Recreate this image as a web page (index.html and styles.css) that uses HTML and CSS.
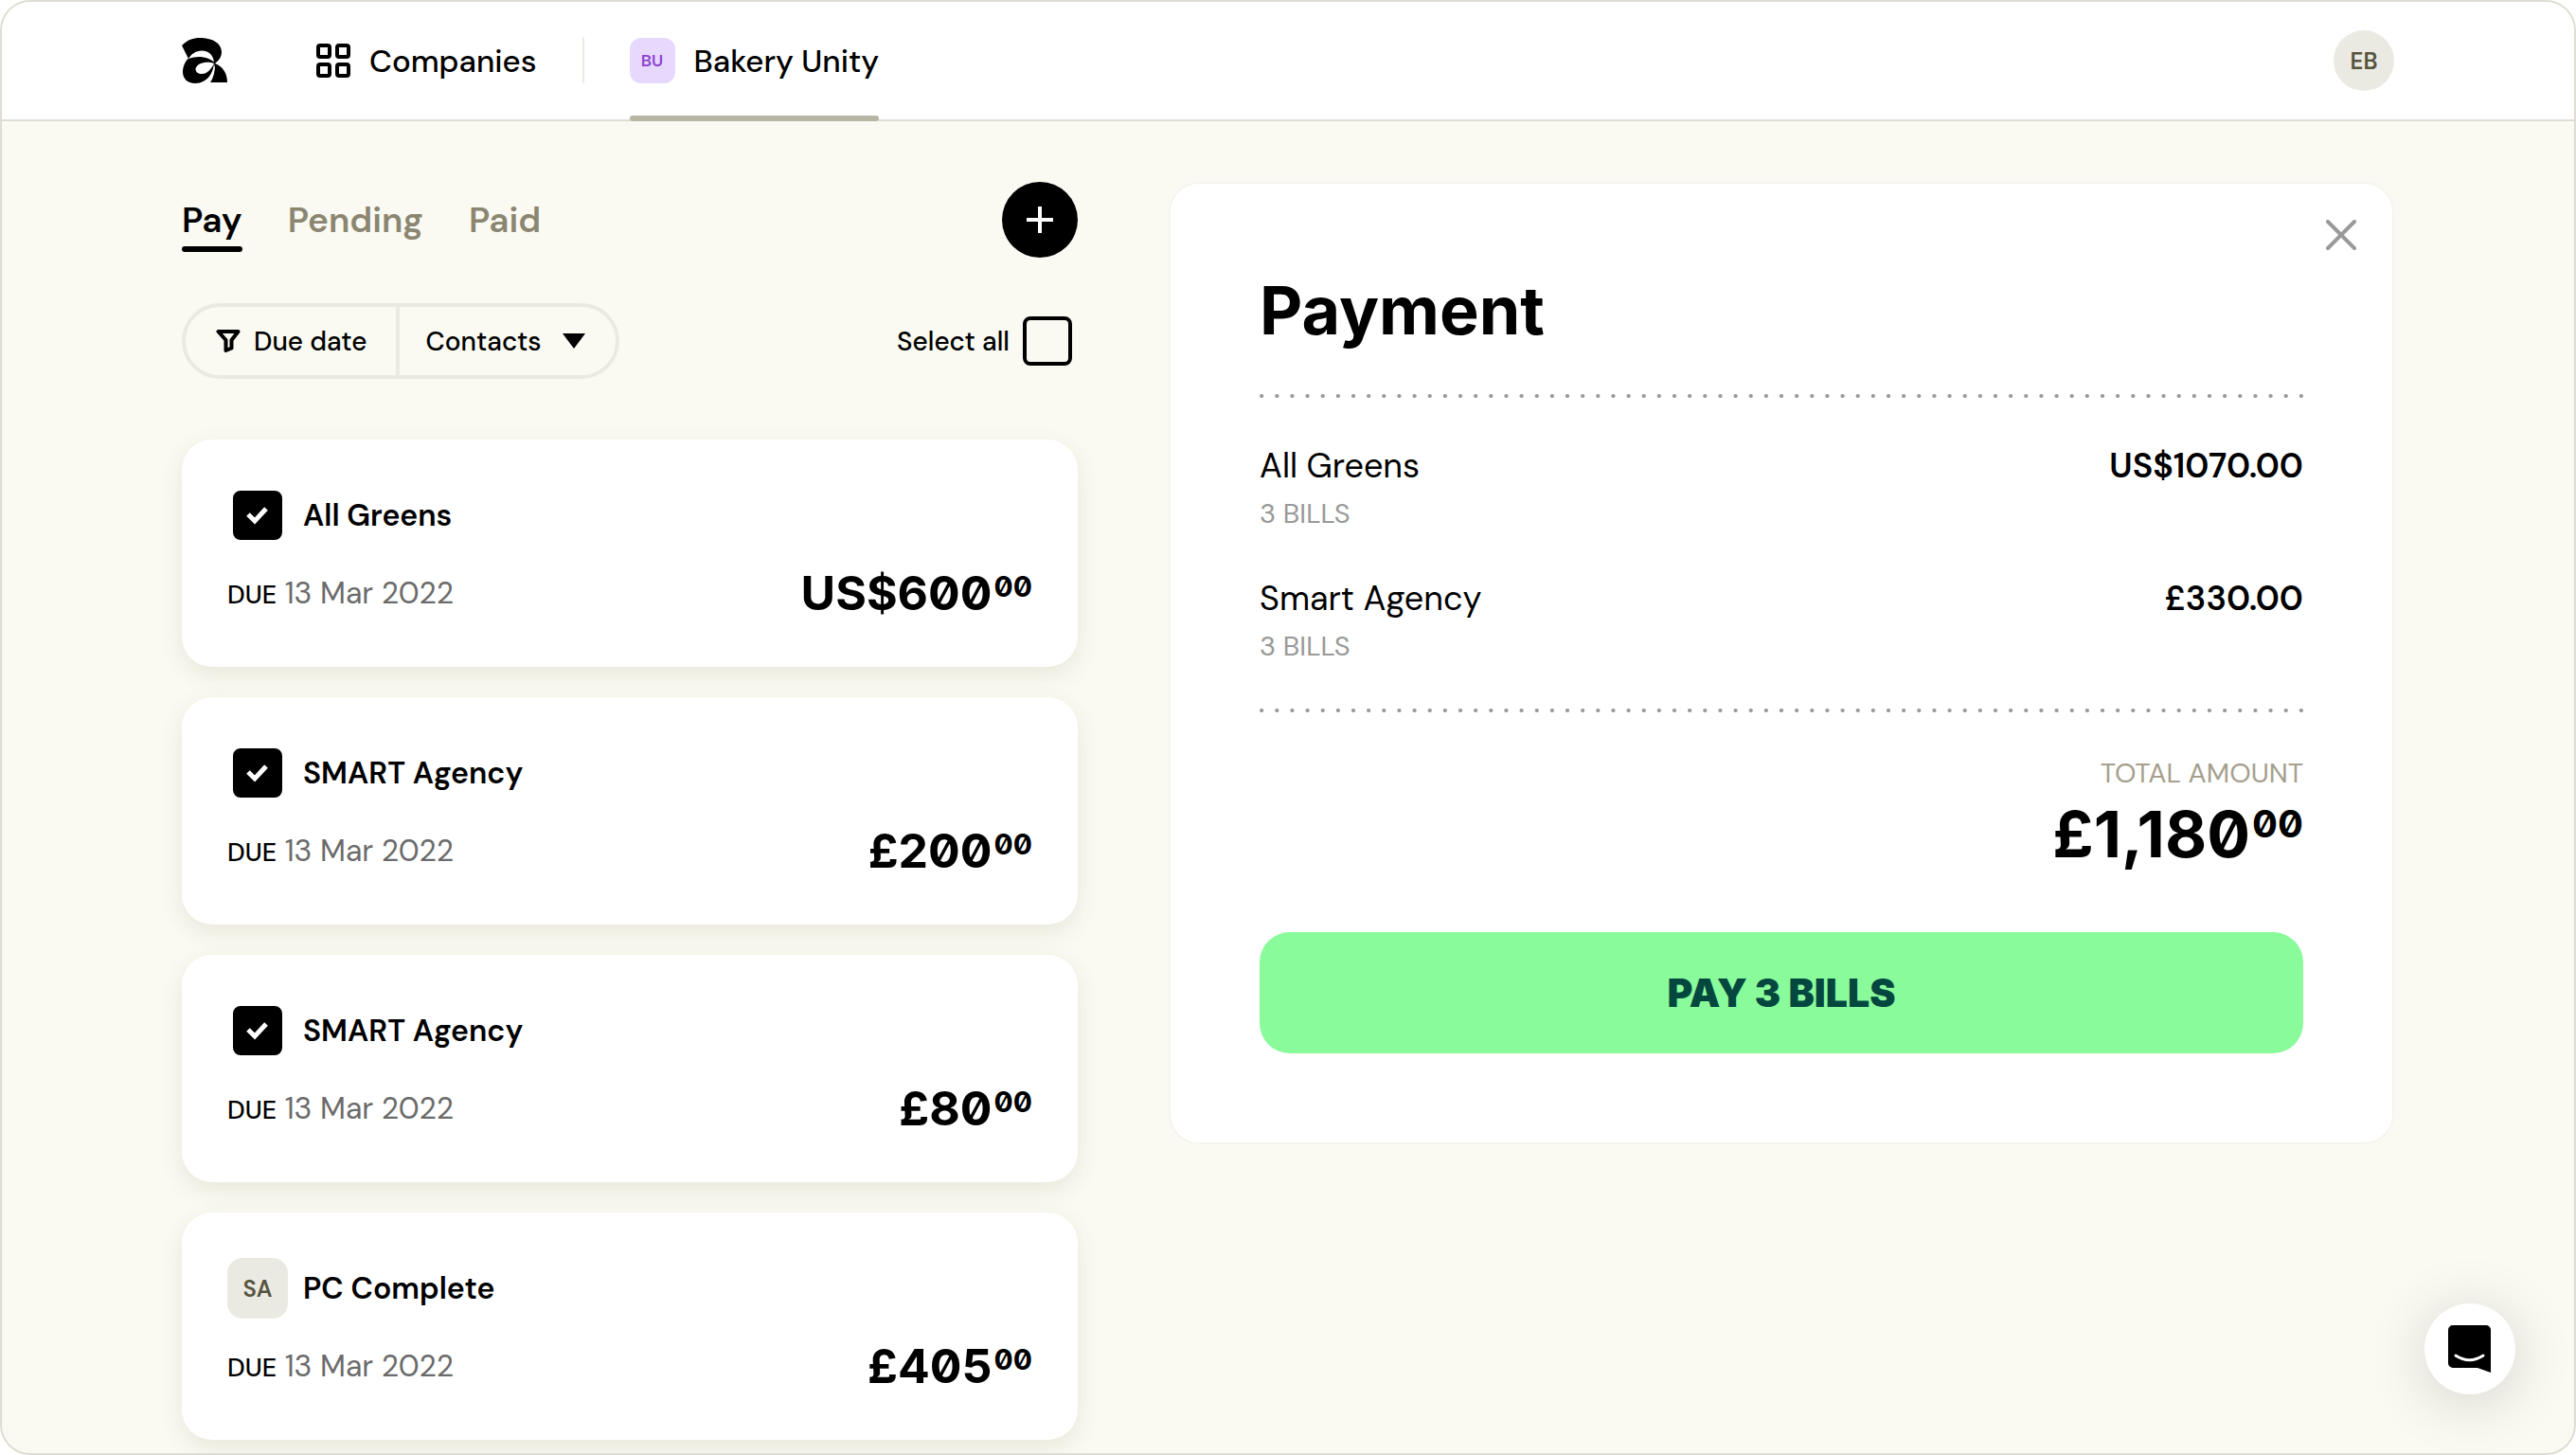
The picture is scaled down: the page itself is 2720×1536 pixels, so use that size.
FILE: index.html
```html
<!DOCTYPE html>
<html lang="en">
<head>
<meta charset="utf-8">
<meta name="viewport" content="width=device-width, initial-scale=1">
<title>Bakery Unity – Pay bills</title>
<link rel="stylesheet" href="styles.css">
</head>
<body>
<div class="app">
  <header class="topbar">
    <a class="logo" href="#" aria-label="Home">
      <svg width="48" height="48" viewBox="0 0 48 48" aria-hidden="true">
        <path d="M0 8C6 2 12 0 19 0c12 0 23 5 23 15 0 5-3 9-7 12 8 3 13 10 13 20H30c3-4 5-11 5-19C33 35 28 48 14 48 6 48 1 43 1 36 1 28 6 22 7 22Z"/>
        <path fill="#fff" d="M7 22c3-5 8-8.500 14-8.500 7 0 12 4 13 12C28 20 17 18 7 22Z"/>
        <path fill="#fff" d="M34 27c-6-3-19-1-19.500 6 0 3 3 5 6.500 5 6 0 10-5 13-11Z"/>
        <path fill="#fff" d="M34 27c-1 9-5 17-12 21h7c4-6 6-13 5-21Z"/>
      </svg>
    </a>
    <nav class="topnav">
      <a class="topnav-link" href="#">
        <svg width="36" height="36" viewBox="0 0 36 36" fill="none" stroke="#000" stroke-width="4" aria-hidden="true">
          <rect x="2" y="2" width="12" height="12" rx="2"/><rect x="22" y="2" width="12" height="12" rx="2"/>
          <rect x="2" y="22" width="12" height="12" rx="2"/><rect x="22" y="22" width="12" height="12" rx="2"/>
        </svg>
        Companies
      </a>
      <span class="divider"></span>
      <a class="topnav-link current" href="#" aria-current="page"><span class="badge">BU</span>Bakery Unity</a>
    </nav>
    <button class="user" type="button">EB</button>
  </header>

  <main class="content">
    <section class="bills">
      <div class="bills-head">
        <nav class="tabs">
          <a class="tab active" href="#">Pay</a>
          <a class="tab" href="#">Pending</a>
          <a class="tab" href="#">Paid</a>
        </nav>
        <button class="add" type="button" aria-label="Add bill">
          <svg width="28" height="28" viewBox="0 0 28 28" stroke="#fff" stroke-width="4" aria-hidden="true"><path d="M14 0v28M0 14h28"/></svg>
        </button>
      </div>

      <div class="tools">
        <div class="filters">
          <button class="filter" type="button">
            <svg width="26" height="26" viewBox="0 0 26 26" fill="none" stroke="#000" stroke-width="4" stroke-linejoin="round" aria-hidden="true"><path d="M2.500 3h21l-7 9v8.500L10.500 23V12Z"/></svg>
            Due date
          </button>
          <button class="filter contacts" type="button">
            Contacts
            <svg width="24" height="16" viewBox="0 0 24 16" aria-hidden="true"><path d="M0 0h24L12 16Z"/></svg>
          </button>
        </div>
        <label class="select-all">Select all <input class="check" type="checkbox"></label>
      </div>

      <ul class="list">
        <li class="card">
          <label class="payee"><span class="mark"><input class="check" type="checkbox" checked></span>All Greens</label>
          <div class="card-row">
            <p class="due"><span class="due-label">DUE</span> 13 Mar 2022</p>
            <p class="amount">US$600<span class="cents">00</span></p>
          </div>
        </li>
        <li class="card">
          <label class="payee"><span class="mark"><input class="check" type="checkbox" checked></span>SMART Agency</label>
          <div class="card-row">
            <p class="due"><span class="due-label">DUE</span> 13 Mar 2022</p>
            <p class="amount">£200<span class="cents">00</span></p>
          </div>
        </li>
        <li class="card">
          <label class="payee"><span class="mark"><input class="check" type="checkbox" checked></span>SMART Agency</label>
          <div class="card-row">
            <p class="due"><span class="due-label">DUE</span> 13 Mar 2022</p>
            <p class="amount">£80<span class="cents">00</span></p>
          </div>
        </li>
        <li class="card">
          <div class="payee"><span class="mark initials">SA</span>PC Complete</div>
          <div class="card-row">
            <p class="due"><span class="due-label">DUE</span> 13 Mar 2022</p>
            <p class="amount">£405<span class="cents">00</span></p>
          </div>
        </li>
      </ul>
    </section>

    <section class="payment">
      <button class="close" type="button" aria-label="Close">
        <svg width="32" height="32" viewBox="0 0 32 32" stroke="#999" stroke-width="4" stroke-linecap="round" aria-hidden="true"><path d="M2 2l28 28M30 2L2 30"/></svg>
      </button>
      <h1 class="title">Payment</h1>
      <svg class="dots" aria-hidden="true"><line x1="0" y1="2" x2="100%" y2="2" pathLength="6802"/></svg>
      <ul class="summary">
        <li class="summary-item">
          <div><p class="name">All Greens</p><p class="count">3 BILLS</p></div>
          <p class="sum">US$1070.00</p>
        </li>
        <li class="summary-item">
          <div><p class="name">Smart Agency</p><p class="count">3 BILLS</p></div>
          <p class="sum">£330.00</p>
        </li>
      </ul>
      <svg class="dots" aria-hidden="true"><line x1="0" y1="2" x2="100%" y2="2" pathLength="6802"/></svg>
      <div class="total">
        <p class="total-label">TOTAL AMOUNT</p>
        <p class="amount total-amount">£1,180<span class="cents">00</span></p>
      </div>
      <button class="pay" type="button">PAY 3 BILLS</button>
    </section>
  </main>

  <button class="chat" type="button" aria-label="Open chat">
    <svg width="46" height="50" viewBox="0 0 46 50" aria-hidden="true">
      <path d="M5 0h35a5 5 0 0 1 5 5v45l-14-5H5a5 5 0 0 1-5-5V5a5 5 0 0 1 5-5Z"/>
      <path d="M8 32q14.500 9.500 29 0" fill="none" stroke="#fff" stroke-width="3" stroke-linecap="round"/>
    </svg>
  </button>
</div>
</body>
</html>
```
FILE: styles.css
```css
* { box-sizing: border-box; }

body {
  margin: 0;
  background: #fff;
  color: #000;
  font-family: "DM Sans", Inter, "Liberation Sans", sans-serif;
  font-size: 32px;
  font-weight: 500;
}

h1, p, ul { margin: 0; padding: 0; }
ul { list-style: none; }
a { color: inherit; text-decoration: none; }
svg { display: block; flex: none; }

button {
  display: flex;
  align-items: center;
  justify-content: center;
  padding: 0;
  border: 0;
  background: none;
  color: inherit;
  font: inherit;
  cursor: pointer;
}

.app {
  display: flex;
  flex-direction: column;
  height: 100vh;
  overflow: hidden;
  border: 2px solid #dfddd3;
  border-radius: 32px;
  background: #fafaf2;
}

/* Top bar */
.topbar {
  display: flex;
  flex: none;
  align-items: center;
  height: 126px;
  padding: 0 190px;
  border-bottom: 2px solid #dfddd3;
  background: #fff;
  font-size: 33px;
}

.topnav {
  display: flex;
  align-items: center;
  align-self: stretch;
  margin-left: 94px;
}

.topnav-link {
  position: relative;
  display: flex;
  align-items: center;
  align-self: stretch;
  gap: 20px;
}

.current::after {
  content: "";
  position: absolute;
  right: 0;
  bottom: -2px;
  left: 0;
  height: 6px;
  border-radius: 3px;
  background: #b9b5a5;
}

.divider {
  width: 2px;
  height: 48px;
  margin: 0 48px;
  background: #ebeae2;
}

.badge {
  width: 48px;
  border-radius: 12px;
  background: #e7d9fe;
  color: #8f43d3;
  font-size: 18px;
  font-weight: 600;
  line-height: 48px;
  text-align: center;
}

.user {
  width: 64px;
  height: 64px;
  margin-left: auto;
  border-radius: 50%;
  background: #ebeae2;
  color: #56543f;
  font-size: 24px;
  font-weight: 600;
}

/* Page columns */
.content {
  display: grid;
  grid-template-columns: 946fr 1294fr;
  align-items: start;
  gap: 96px;
  padding: 64px 190px 14px;
}

.bills-head, .tools {
  display: flex;
  align-items: center;
  justify-content: space-between;
}

.tabs {
  display: flex;
  gap: 48px;
}

.tab {
  padding: 10px 0 4px;
  border-bottom: 6px solid transparent;
  color: #8b8671;
  font-size: 37px;
  font-weight: 600;
  line-height: 48px;
}

.tab.active {
  position: relative;
  color: #000;
}

.tab.active::after {
  content: "";
  position: absolute;
  right: 0;
  bottom: -6px;
  left: 0;
  height: 6px;
  border-radius: 3px;
  background: #000;
}

.add {
  width: 80px;
  height: 80px;
  border-radius: 50%;
  background: #000;
}

.tools {
  margin-top: 48px;
  padding-right: 6px;
  font-size: 28px;
}

.filters {
  display: flex;
  height: 80px;
  border: 4px solid #ebeae2;
  border-radius: 40px;
}

.filter {
  gap: 14px;
  padding: 0 30px 0 32px;
}

.contacts {
  gap: 22px;
  padding: 0 32px 0 28px;
  border-left: 4px solid #ebeae2;
}

.select-all {
  display: flex;
  align-items: center;
  gap: 14px;
}

.check {
  width: 52px;
  height: 52px;
  margin: 0;
  border: 4px solid #000;
  border-radius: 8px;
  appearance: none;
}

.check:checked {
  background: #000 url("data:image/svg+xml,%3Csvg xmlns='http://www.w3.org/2000/svg' viewBox='0 0 24 20' fill='none' stroke='white' stroke-width='5'%3E%3Cpath d='M2 9l7 7L21 3'/%3E%3C/svg%3E") center / 24px 20px no-repeat;
}

/* Bill cards */
.list {
  display: grid;
  gap: 32px;
  margin-top: 64px;
}

.card {
  display: grid;
  gap: 18px;
  padding: 48px 48px 46px;
  border-radius: 32px;
  background: #fff;
  box-shadow: 0 8px 24px rgba(87, 66, 30, .1);
}

.payee {
  display: flex;
  align-items: center;
  gap: 16px;
  font-weight: 600;
}

.mark {
  display: grid;
  place-items: center;
  width: 64px;
  height: 64px;
}

.initials {
  border-radius: 16px;
  background: #ebeae2;
  color: #56543f;
  font-size: 24px;
}

.card-row {
  display: flex;
  align-items: center;
  justify-content: space-between;
}

.due {
  color: #6b6b6b;
  font-weight: 400;
}

.due-label {
  color: #000;
  font-size: 27px;
  font-weight: 500;
}

.amount, .title, .pay {
  font-family: Inter, "Liberation Sans", sans-serif;
}

.amount {
  display: flex;
  align-items: flex-start;
  font-size: 50px;
  font-weight: 700;
  font-feature-settings: "zero";
  line-height: 64px;
}

.cents {
  margin-left: 2px;
  font-size: 30px;
  line-height: 50px;
}

/* Payment panel */
.payment {
  position: relative;
  padding: 94px;
  border: 2px solid #f6f4ee;
  border-radius: 32px;
  background: #fff;
}

.close {
  position: absolute;
  top: 30px;
  right: 30px;
  width: 48px;
  height: 48px;
}

.title {
  font-size: 70px;
  font-weight: 700;
  line-height: 80px;
}

.dots {
  width: calc(100% - 4px);
  height: 4px;
  margin: 48px 2px 46px;
  overflow: visible;
}

.summary + .dots {
  margin: 42px 2px 40px;
}

.dots line {
  stroke: #999;
  stroke-width: 4px;
  stroke-linecap: round;
  stroke-dasharray: 2 98;
}

.summary {
  display: grid;
  gap: 40px;
}

.summary-item {
  display: flex;
  justify-content: space-between;
  font-size: 36px;
  line-height: 52px;
}

.name { font-weight: 400; }
.sum { font-weight: 600; }

.count, .total-label {
  color: #999;
  font-size: 29px;
  font-weight: 400;
  line-height: 48px;
}

.total {
  display: flex;
  flex-direction: column;
  align-items: flex-end;
}

.total-label { color: #a5a08d; }

.total-amount {
  font-size: 68px;
  line-height: 80px;
}

.total-amount .cents {
  font-size: 40px;
  line-height: 60px;
}

.pay {
  width: 100%;
  height: 128px;
  margin-top: 64px;
  border-radius: 32px;
  background: #8afb9b;
  color: #04473f;
  font-size: 41px;
  font-weight: 900;
}

/* Chat launcher */
.chat {
  position: fixed;
  right: 64px;
  bottom: 64px;
  width: 96px;
  height: 96px;
  border-radius: 50%;
  background: #fff;
  box-shadow: 0 8px 64px rgba(0, 0, 0, .16);
}
```
